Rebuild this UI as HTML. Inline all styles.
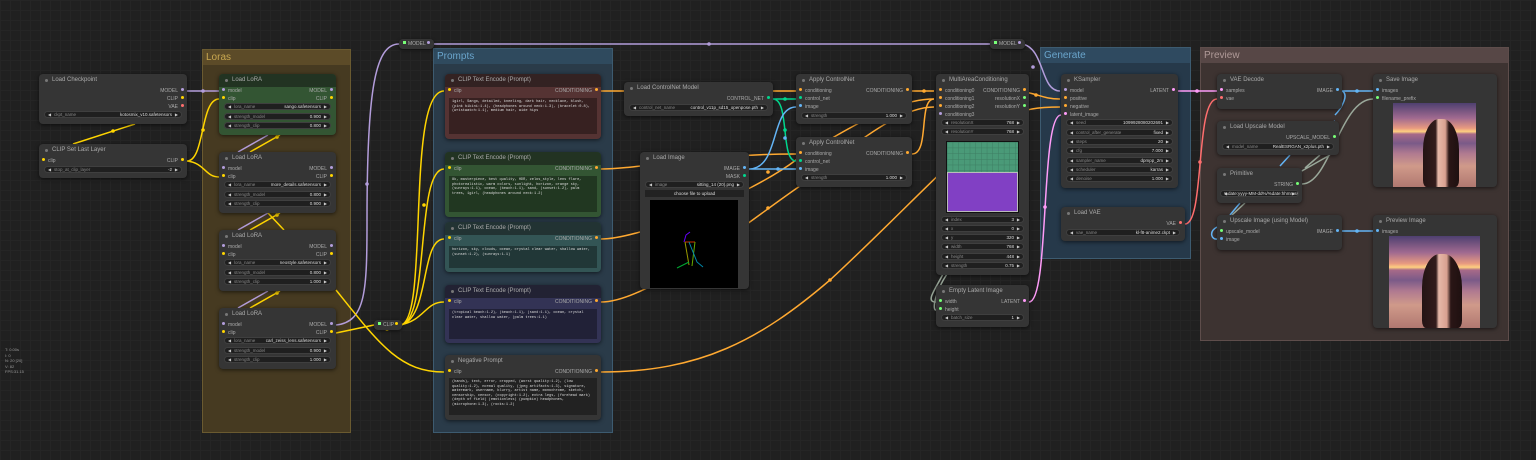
<!DOCTYPE html>
<html><head><meta charset="utf-8"><style>
*{box-sizing:border-box;margin:0;padding:0}
body{width:1536px;height:460px;overflow:hidden;position:relative;background:#202020;
background-image:linear-gradient(#252525 1px,transparent 1px),linear-gradient(90deg,#252525 1px,transparent 1px);
background-size:10px 10px;font-family:"Liberation Sans",sans-serif}
.g{position:absolute;border:1px solid rgba(255,255,255,.08)}
.g .t{height:15px;font-size:10px;line-height:15px;padding-left:3px}
.n{position:absolute;background:#353535;border-radius:4px;box-shadow:0 1px 4px rgba(0,0,0,.6);font-size:5px;color:#aaa}
.h{height:13px;border-radius:4px 4px 0 0;color:#aaa;font-size:6px;line-height:13px;padding-left:13px;position:relative}
.h:before{content:"";position:absolute;left:6px;top:5px;width:3px;height:3px;border-radius:50%;background:#777}
.i,.o{position:absolute;height:6px;line-height:6px;white-space:nowrap}
.i{left:3px}.o{right:3px}
.i b{margin-right:3px}.o b{margin-left:3px}
b{display:inline-block;width:3px;height:3px;border-radius:50%;vertical-align:1px}
.w{position:absolute;left:5px;right:5px;height:7px;border-radius:4px;background:#1f1f1f;border:.5px solid #3f3f3f;font-size:4.5px;line-height:6px;color:#888;padding:0 9px;white-space:nowrap;overflow:hidden}
.w:before{content:"◀";position:absolute;left:3px;color:#ccc;font-size:4px}
.w:after{content:"▶";position:absolute;right:3px;color:#ccc;font-size:4px}
.w span{float:right;color:#ddd}
.ta{position:absolute;left:4px;right:4px;background:rgba(0,0,0,.35);font-family:"Liberation Mono",monospace;font-size:3.6px;line-height:4.6px;color:#ddd;padding:2px 3px;word-break:break-word}
.Y{background:#ffd500}.P{background:#b39ddb}.R{background:#ff6e6e}.O{background:#ffa931}.G{background:#00d78d}.B{background:#64b5f6}.K{background:#f0f}.L{background:#7f7}.LP{background:#ff9cf9}
.rr{position:absolute;background:#353535;border-radius:4px;font-size:5px;color:#aaa;line-height:10px;height:10px;padding:0 4px;box-shadow:0 1px 3px rgba(0,0,0,.6)}
.pic{position:absolute;background:linear-gradient(#4e4070 0%,#a06a90 18%,#e89a80 30%,#ffd080 34%,#a86a88 37%,#7a5a88 48%,#b07a90 60%,#d09a8a 75%,#b07870 100%);overflow:hidden}
.pic .s{position:absolute;left:40%;top:28%;width:16%;height:10%;border-radius:50%;background:radial-gradient(#fff2b0,rgba(255,200,120,0))}
.pic .f{position:absolute;background:linear-gradient(90deg,#241414,#321c1c 35%,#e6b8a8 42%,#d8a090 62%,#2a1616 72%,#1e1010);border-radius:45% 45% 10% 10%}
</style></head><body>

<div class="g" style="left:202px;top:49px;width:149px;height:384px;background:#463a21;border-color:#6a5a30"><div class="t" style="background:#5c4b28;color:#c9a850">Loras</div></div>
<div class="g" style="left:433px;top:48px;width:180px;height:385px;background:#2a3b49;border-color:#3d5b70"><div class="t" style="background:#2f4a5e;color:#6aa5cc">Prompts</div></div>
<div class="g" style="left:1040px;top:47px;width:151px;height:212px;background:#26394a;border-color:#3d5b70"><div class="t" style="background:#2f4a60;color:#6aa5cc">Generate</div></div>
<div class="g" style="left:1200px;top:47px;width:309px;height:294px;background:#3d3331;border-color:#5e4d4b"><div class="t" style="background:#574746;color:#b09a98">Preview</div></div>

<svg style="position:absolute;left:0;top:0" width="1536" height="460" fill="none" stroke-width="1.5">
<g stroke="#b39ddb">
<path d="M187,91 L219,91"/>
<path d="M268,135 L238,152 M268,213 L238,230 M268,291 L238,308"/>
<path d="M336,325 C366,322 367,290 367,220 C367,90 375,44 399,44"/>
<path d="M428,44 L990,44"/>
<path d="M1022,44 C1045,48 1040,91 1060,91"/>
</g>
<g stroke="#ffd500">
<path d="M135,124 L73,144"/>
<path d="M187,161 C205,161 200,99 219,99"/>
<path d="M187,161 C205,163 205,177 219,177"/>
<path d="M280,135 L250,152 M280,213 L250,230 M280,291 L250,308"/>
<path d="M268,213 L284,230"/>
<path d="M336,290 C380,345 400,372 444,372"/>
<path d="M336,333 L374,325"/>
<path d="M400,325 C430,325 405,91 444,91"/>
<path d="M400,325 C430,325 415,169 444,169"/>
<path d="M400,325 C430,320 420,239 444,239"/>
<path d="M400,325 C425,320 425,302 444,302"/>
</g>
<g stroke="#ffa931">
<path d="M601,91 L796,91"/>
<path d="M601,169 C640,169 700,154 796,154"/>
<path d="M601,239 C640,239 750,195 796,160 C860,120 900,99 934,99"/>
<path d="M601,302 C650,302 750,220 800,186 C860,140 900,107 934,107"/>
<path d="M601,372 C700,372 760,340 830,280 C890,225 960,150 1000,120 C1025,108 1040,107 1060,107"/>
<path d="M912,91 L934,91"/>
<path d="M912,154 C930,154 918,99 934,99"/>
<path d="M1012,91 C1035,91 1040,99 1060,99"/>
</g>
<g stroke="#00d78d">
<path d="M773,99 L796,99"/>
<path d="M773,99 C790,99 780,161 796,161"/>
</g>
<g stroke="#64b5f6">
<path d="M749,169 C780,169 770,107 796,107"/>
<path d="M749,169 L796,169"/>
<path d="M1342,91 L1373,91"/>
<path d="M1342,91 C1350,95 1340,110 1335,115 M1335,121 L1325,127"/>
<path d="M1290,155 L1280,166 M1240,203 L1230,215 M1217,227 C1208,232 1212,240 1217,239"/>
<path d="M1342,231 L1373,231"/>
</g>
<g stroke="#9aa89a">
<path d="M1012,99 C1025,99 1020,140 1018,150 M1012,107 C1022,107 1025,130 1018,145"/>
<path d="M943,274 C935,290 925,302 936,302 M947,274 C935,292 932,310 936,310"/>
<path d="M1302,184 C1330,184 1340,99 1373,99"/>
<path d="M1330,155 L1300,172 M1320,155 L1305,168 M1245,203 L1232,215"/>
</g>
<path stroke="#ff9cf9" d="M1029,302 C1050,302 1040,115 1061,115"/>
<path stroke="#ff9cf9" d="M1178,91 L1217,91"/>
<path stroke="#ff6e6e" d="M1185,224 C1205,224 1195,99 1217,99"/>
<g fill="#ffd500" stroke="none"><circle cx="113" cy="131" r="1.8"/><circle cx="203" cy="130" r="1.8"/><circle cx="387" cy="329" r="1.8"/><circle cx="424" cy="205" r="1.8"/><circle cx="277" cy="137" r="1.8"/><circle cx="277" cy="215" r="1.8"/><circle cx="277" cy="293" r="1.8"/></g>
<g fill="#ffa931" stroke="none"><circle cx="768" cy="172" r="1.8"/><circle cx="768" cy="208" r="1.8"/><circle cx="830" cy="280" r="1.8"/><circle cx="924" cy="91" r="1.8"/><circle cx="1036" cy="95" r="1.8"/></g>
<g fill="#b39ddb" stroke="none"><circle cx="709" cy="44" r="1.8"/><circle cx="367" cy="184" r="1.8"/><circle cx="1033" cy="67" r="1.8"/><circle cx="203" cy="91" r="1.8"/></g>
<circle cx="1197" cy="91" r="1.8" fill="#ff9cf9"/><circle cx="1045" cy="207" r="1.8" fill="#ff9cf9"/><circle cx="1200" cy="162" r="1.8" fill="#ff6e6e"/>
<circle cx="1357" cy="91" r="1.8" fill="#64b5f6"/><circle cx="1357" cy="231" r="1.8" fill="#64b5f6"/><circle cx="778" cy="169" r="1.8" fill="#64b5f6"/><circle cx="785" cy="138" r="1.8" fill="#64b5f6"/>
<circle cx="785" cy="99" r="1.8" fill="#00d78d"/><circle cx="785" cy="130" r="1.8" fill="#00d78d"/>
</svg>

<div class="rr" style="left:399px;top:39px"><b class="L" style="border-radius:0;margin-right:2px"></b>MODEL <b class="P"></b></div>
<div class="rr" style="left:990px;top:39px"><b class="L" style="border-radius:0;margin-right:2px"></b>MODEL <b class="P"></b></div>
<div class="rr" style="left:374px;top:320px"><b class="L" style="border-radius:0;margin-right:2px"></b>CLIP <b class="Y"></b></div>

<div class="n" style="left:39px;top:74px;width:148px;height:50px"><div class="h">Load Checkpoint</div>
<div class="o" style="top:14px">MODEL<b class="P"></b></div><div class="o" style="top:22px">CLIP<b class="Y"></b></div><div class="o" style="top:30px">VAE<b class="R"></b></div>
<div class="w" style="top:37px">ckpt_name<span>kotosmix_v10.safetensors</span></div></div>

<div class="n" style="left:39px;top:144px;width:148px;height:34px"><div class="h">CLIP Set Last Layer</div>
<div class="i" style="top:14px"><b class="Y"></b>clip</div><div class="o" style="top:14px">CLIP<b class="Y"></b></div>
<div class="w" style="top:22px">stop_at_clip_layer<span>-2</span></div></div>

<div class="n" style="left:219px;top:74px;width:117px;height:61px;background:#335533"><div class="h" style="background:#223322">Load LoRA</div>
<div class="i" style="top:14px"><b class="P"></b>model</div><div class="o" style="top:14px">MODEL<b class="P"></b></div>
<div class="i" style="top:22px"><b class="Y"></b>clip</div><div class="o" style="top:22px">CLIP<b class="Y"></b></div>
<div class="w" style="top:29px">lora_name<span>sango.safetensors</span></div><div class="w" style="top:38.5px">strength_model<span>0.900</span></div><div class="w" style="top:48px">strength_clip<span>0.800</span></div></div>

<div class="n" style="left:219px;top:152px;width:117px;height:61px"><div class="h">Load LoRA</div>
<div class="i" style="top:14px"><b class="P"></b>model</div><div class="o" style="top:14px">MODEL<b class="P"></b></div>
<div class="i" style="top:22px"><b class="Y"></b>clip</div><div class="o" style="top:22px">CLIP<b class="Y"></b></div>
<div class="w" style="top:29px">lora_name<span>more_details.safetensors</span></div><div class="w" style="top:38.5px">strength_model<span>0.800</span></div><div class="w" style="top:48px">strength_clip<span>0.900</span></div></div>

<div class="n" style="left:219px;top:230px;width:117px;height:61px"><div class="h">Load LoRA</div>
<div class="i" style="top:14px"><b class="P"></b>model</div><div class="o" style="top:14px">MODEL<b class="P"></b></div>
<div class="i" style="top:22px"><b class="Y"></b>clip</div><div class="o" style="top:22px">CLIP<b class="Y"></b></div>
<div class="w" style="top:29px">lora_name<span>neostyle.safetensors</span></div><div class="w" style="top:38.5px">strength_model<span>0.800</span></div><div class="w" style="top:48px">strength_clip<span>1.000</span></div></div>

<div class="n" style="left:219px;top:308px;width:117px;height:61px"><div class="h">Load LoRA</div>
<div class="i" style="top:14px"><b class="P"></b>model</div><div class="o" style="top:14px">MODEL<b class="P"></b></div>
<div class="i" style="top:22px"><b class="Y"></b>clip</div><div class="o" style="top:22px">CLIP<b class="Y"></b></div>
<div class="w" style="top:29px">lora_name<span>carl_zeiss_lens.safetensors</span></div><div class="w" style="top:38.5px">strength_model<span>0.900</span></div><div class="w" style="top:48px">strength_clip<span>1.000</span></div></div>

<div class="n" style="left:445px;top:74px;width:156px;height:65px;background:#553333"><div class="h" style="background:#332222">CLIP Text Encode (Prompt)</div>
<div class="i" style="top:14px"><b class="Y"></b>clip</div><div class="o" style="top:14px">CONDITIONING<b class="O"></b></div>
<div class="ta" style="top:24px;height:36px">1girl, Sango, detailed, kneeling, dark hair, necklace, blush, (pink bikini:1.4), (headphones around neck:1.3), (bracelet:0.8), (wristwatch:1.1), medium hair, wide hips</div></div>

<div class="n" style="left:445px;top:152px;width:156px;height:65px;background:#335533"><div class="h" style="background:#223322">CLIP Text Encode (Prompt)</div>
<div class="i" style="top:14px"><b class="Y"></b>clip</div><div class="o" style="top:14px">CONDITIONING<b class="O"></b></div>
<div class="ta" style="top:24px;height:36px">8k, masterpiece, best quality, HDR, zelos_style, lens flare, photorealistic, warm colors, sunlight, horizon, orange sky, (sunrays:1.1), ocean, (beach:1.1), sand, (sunset:1.2), palm trees, 1girl, (headphones around neck:1.2)</div></div>

<div class="n" style="left:445px;top:222px;width:156px;height:50px;background:#335555"><div class="h" style="background:#223333">CLIP Text Encode (Prompt)</div>
<div class="i" style="top:14px"><b class="Y"></b>clip</div><div class="o" style="top:14px">CONDITIONING<b class="O"></b></div>
<div class="ta" style="top:24px;height:22px">horizon, sky, clouds, ocean, crystal clear water, shallow water, (sunset:1.2), (sunrays:1.1)</div></div>

<div class="n" style="left:445px;top:285px;width:156px;height:58px;background:#333355"><div class="h" style="background:#222233">CLIP Text Encode (Prompt)</div>
<div class="i" style="top:14px"><b class="Y"></b>clip</div><div class="o" style="top:14px">CONDITIONING<b class="O"></b></div>
<div class="ta" style="top:24px;height:30px">(tropical beach:1.2), (beach:1.1), (sand:1.1), ocean, crystal clear water, shallow water, (palm trees:1.1)</div></div>

<div class="n" style="left:445px;top:355px;width:156px;height:65px"><div class="h">Negative Prompt</div>
<div class="i" style="top:14px"><b class="Y"></b>clip</div><div class="o" style="top:14px">CONDITIONING<b class="O"></b></div>
<div class="ta" style="top:23px;height:37px">(hands), text, error, cropped, (worst quality:1.2), (low quality:1.2), normal quality, (jpeg artifacts:1.3), signature, watermark, username, blurry, artist name, monochrome, sketch, censorship, censor, (copyright:1.2), extra legs, (forehead mark) (depth of field) (emotionless) (pumpkin) headphones, (microphone:1.3), (rocks:1.2)</div></div>

<div class="n" style="left:624px;top:82px;width:149px;height:34px"><div class="h">Load ControlNet Model</div>
<div class="o" style="top:14px">CONTROL_NET<b class="G"></b></div>
<div class="w" style="top:22px">control_net_name<span>control_v11p_sd15_openpose.pth</span></div></div>

<div class="n" style="left:640px;top:152px;width:109px;height:137px"><div class="h">Load Image</div>
<div class="o" style="top:14px">IMAGE<b class="B"></b></div><div class="o" style="top:22px">MASK<b class="G"></b></div>
<div class="w" style="top:29px">image<span>sitting_14 (20).png</span></div>
<div style="position:absolute;left:5px;right:5px;top:38px;height:7px;background:#222;color:#ddd;font-size:4.5px;line-height:7px;text-align:center">choose file to upload</div>
<svg style="position:absolute;left:10px;top:48px" width="88" height="88"><rect width="88" height="88" fill="#000"/>
<g stroke-width="1" fill="none"><path d="M34,42 L36,35 L40,32" stroke="#60f"/><path d="M35,42 L45,42" stroke="#c30"/><path d="M35,42 L39,65" stroke="#990"/><path d="M45,42 L42,66" stroke="#6a0"/><path d="M39,42 L47,62 L53,67" stroke="#08a"/><path d="M39,62 L27,68" stroke="#0a3"/></g></svg></div>

<div class="n" style="left:796px;top:74px;width:116px;height:50px"><div class="h">Apply ControlNet</div>
<div class="i" style="top:14px"><b class="O"></b>conditioning</div><div class="o" style="top:14px">CONDITIONING<b class="O"></b></div>
<div class="i" style="top:22px"><b class="G"></b>control_net</div><div class="i" style="top:30px"><b class="B"></b>image</div>
<div class="w" style="top:38px">strength<span>1.000</span></div></div>

<div class="n" style="left:796px;top:137px;width:116px;height:50px"><div class="h">Apply ControlNet</div>
<div class="i" style="top:14px"><b class="O"></b>conditioning</div><div class="o" style="top:14px">CONDITIONING<b class="O"></b></div>
<div class="i" style="top:22px"><b class="G"></b>control_net</div><div class="i" style="top:30px"><b class="B"></b>image</div>
<div class="w" style="top:37px">strength<span>1.000</span></div></div>

<div class="n" style="left:936px;top:74px;width:93px;height:201px"><div class="h">MultiAreaConditioning</div>
<div class="i" style="top:14px"><b class="O"></b>conditioning0</div><div class="o" style="top:14px">CONDITIONING<b class="O"></b></div>
<div class="i" style="top:22px"><b class="O"></b>conditioning1</div><div class="o" style="top:22px">resolutionX<b class="L"></b></div>
<div class="i" style="top:30px"><b class="O"></b>conditioning2</div><div class="o" style="top:30px">resolutionY<b class="L"></b></div>
<div class="i" style="top:38px"><b class="P"></b>conditioning3</div>
<div class="w" style="top:45px">resolutionX<span>768</span></div><div class="w" style="top:54px">resolutionY<span>768</span></div>
<div style="position:absolute;left:10px;top:67px;width:73px;height:72px;background:#111;border:1px solid #111">
<div style="height:30px;background:#4a9a78;background-image:linear-gradient(#3d7d62 .5px,transparent .5px),linear-gradient(90deg,#3d7d62 .5px,transparent .5px);background-size:5.7px 5.7px"></div>
<div style="height:40px;background:#8140c4;border:1px solid #bbb"></div></div>
<div class="w" style="top:142px">index<span>3</span></div><div class="w" style="top:151px">x<span>0</span></div><div class="w" style="top:160px">y<span>320</span></div><div class="w" style="top:169px">width<span>768</span></div><div class="w" style="top:178.5px">height<span>448</span></div><div class="w" style="top:188px">strength<span>0.75</span></div></div>

<div class="n" style="left:936px;top:285px;width:93px;height:42px"><div class="h">Empty Latent Image</div>
<div class="i" style="top:14px"><b class="L"></b>width</div><div class="o" style="top:14px">LATENT<b class="LP"></b></div>
<div class="i" style="top:22px"><b class="L"></b>height</div>
<div class="w" style="top:29px">batch_size<span>1</span></div></div>

<div class="n" style="left:1061px;top:74px;width:117px;height:114px"><div class="h">KSampler</div>
<div class="i" style="top:14px"><b class="P"></b>model</div><div class="o" style="top:14px">LATENT<b class="LP"></b></div>
<div class="i" style="top:22px"><b class="O"></b>positive</div><div class="i" style="top:30px"><b class="O"></b>negative</div><div class="i" style="top:38px"><b class="LP"></b>latent_image</div>
<div class="w" style="top:45px">seed<span>1099928080202691</span></div><div class="w" style="top:54.5px">control_after_generate<span>fixed</span></div><div class="w" style="top:64px">steps<span>20</span></div><div class="w" style="top:73px">cfg<span>7.000</span></div><div class="w" style="top:82.5px">sampler_name<span>dpmpp_2m</span></div><div class="w" style="top:92px">scheduler<span>karras</span></div><div class="w" style="top:101px">denoise<span>1.000</span></div></div>

<div class="n" style="left:1061px;top:207px;width:124px;height:34px"><div class="h">Load VAE</div>
<div class="o" style="top:14px">VAE<b class="R"></b></div>
<div class="w" style="top:22px">vae_name<span>kl-f8-anime2.ckpt</span></div></div>

<div class="n" style="left:1217px;top:74px;width:125px;height:35px"><div class="h">VAE Decode</div>
<div class="i" style="top:14px"><b class="LP"></b>samples</div><div class="o" style="top:14px">IMAGE<b class="B"></b></div>
<div class="i" style="top:22px"><b class="R"></b>vae</div></div>

<div class="n" style="left:1217px;top:121px;width:122px;height:34px"><div class="h">Load Upscale Model</div>
<div class="o" style="top:14px">UPSCALE_MODEL<b class="L"></b></div>
<div class="w" style="top:22px">model_name<span>RealESRGAN_x2plus.pth</span></div></div>

<div class="n" style="left:1217px;top:168px;width:85px;height:35px"><div class="h">Primitive</div>
<div class="o" style="top:14px">STRING<b class="L"></b></div>
<div class="w" style="top:22px;left:3px;right:3px;padding:0 3px;color:#ddd">%date:yyyy-MM-dd%/%date:hhmmss</div></div>

<div class="n" style="left:1217px;top:215px;width:125px;height:35px"><div class="h">Upscale Image (using Model)</div>
<div class="i" style="top:14px"><b class="L"></b>upscale_model</div><div class="o" style="top:14px">IMAGE<b class="B"></b></div>
<div class="i" style="top:22px"><b class="B"></b>image</div></div>

<div class="n" style="left:1373px;top:74px;width:124px;height:113px"><div class="h">Save Image</div>
<div class="i" style="top:14px"><b class="B"></b>images</div><div class="i" style="top:22px"><b class="L"></b>filename_prefix</div>
<div class="pic" style="left:20px;top:29px;width:83px;height:84px"><div class="s"></div>
<div class="f" style="left:30px;top:16px;width:36px;height:68px"></div></div></div>

<div class="n" style="left:1373px;top:215px;width:124px;height:113px"><div class="h">Preview Image</div>
<div class="i" style="top:14px"><b class="B"></b>images</div>
<div class="pic" style="left:16px;top:21px;width:91px;height:92px"><div class="s"></div>
<div class="f" style="left:33px;top:18px;width:40px;height:74px"></div></div></div>

<div style="position:absolute;left:5px;top:347px;font-size:4px;line-height:5.5px;color:#999">T: 0.00s<br>I: 0<br>N: 20 [20]<br>V: 82<br>FPS:31.15</div>
</body></html>
